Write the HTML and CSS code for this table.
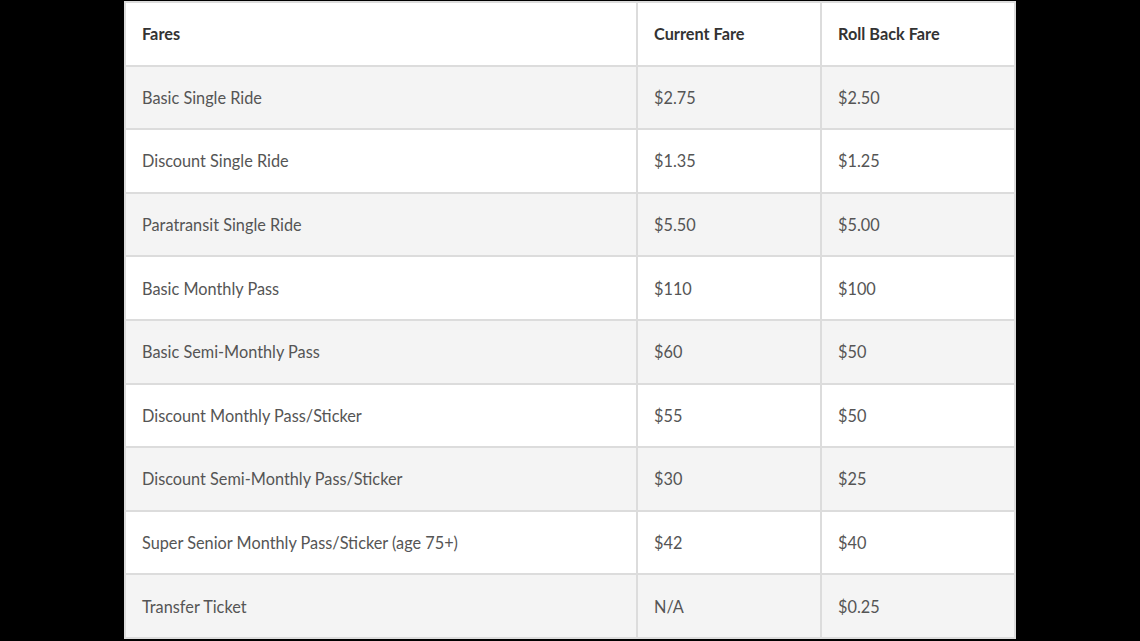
FILE: index.html
```html
<!DOCTYPE html>
<html>
<head>
<meta charset="utf-8">
<link rel="stylesheet" href="styles.css">
</head>
<body>
<div class="frame">
<table class="fares">
<colgroup><col class="c1"><col class="c2"><col class="c3"></colgroup>
<thead>
<tr><th>Fares</th><th>Current Fare</th><th>Roll Back Fare</th></tr>
</thead>
<tbody>
<tr class="alt"><td>Basic Single Ride</td><td>$2.75</td><td>$2.50</td></tr>
<tr><td>Discount Single Ride</td><td>$1.35</td><td>$1.25</td></tr>
<tr class="alt"><td>Paratransit Single Ride</td><td>$5.50</td><td>$5.00</td></tr>
<tr><td>Basic Monthly Pass</td><td>$110</td><td>$100</td></tr>
<tr class="alt"><td>Basic Semi-Monthly Pass</td><td>$60</td><td>$50</td></tr>
<tr><td>Discount Monthly Pass/Sticker</td><td>$55</td><td>$50</td></tr>
<tr class="alt"><td>Discount Semi-Monthly Pass/Sticker</td><td>$30</td><td>$25</td></tr>
<tr><td>Super Senior Monthly Pass/Sticker (age 75+)</td><td>$42</td><td>$40</td></tr>
<tr class="alt"><td>Transfer Ticket</td><td>N/A</td><td>$0.25</td></tr>
</tbody>
</table>
</div>
</body>
</html>
```
FILE: styles.css
```css
html, body {
  margin: 0;
  padding: 0;
  background: #000;
  height: 100%;
  overflow: hidden;
}
.frame {
  display: flex;
  justify-content: flex-start;
  padding: 1px 0 0 124px;
}
.fares {
  width: 890px;
  border-collapse: collapse;
  table-layout: fixed;
  background: #fff;
  font-family: Lato, "Noto Sans", sans-serif;
  font-size: 16.3px;
  color: #555;
}
.c1 { width: 512px; }
.c2 { width: 184px; }
.c3 { width: 194px; }
.fares th, .fares td {
  border: 2px solid #dcdcdc;
  height: 60px;
  padding: 0 0 0 16px;
  text-align: left;
  vertical-align: middle;
  box-sizing: border-box;
}
.fares tr { height: 63.6px; }
.fares th {
  font-weight: 700;
  color: #333;
}
.fares tr.alt td {
  background: #f4f4f4;
}
```
